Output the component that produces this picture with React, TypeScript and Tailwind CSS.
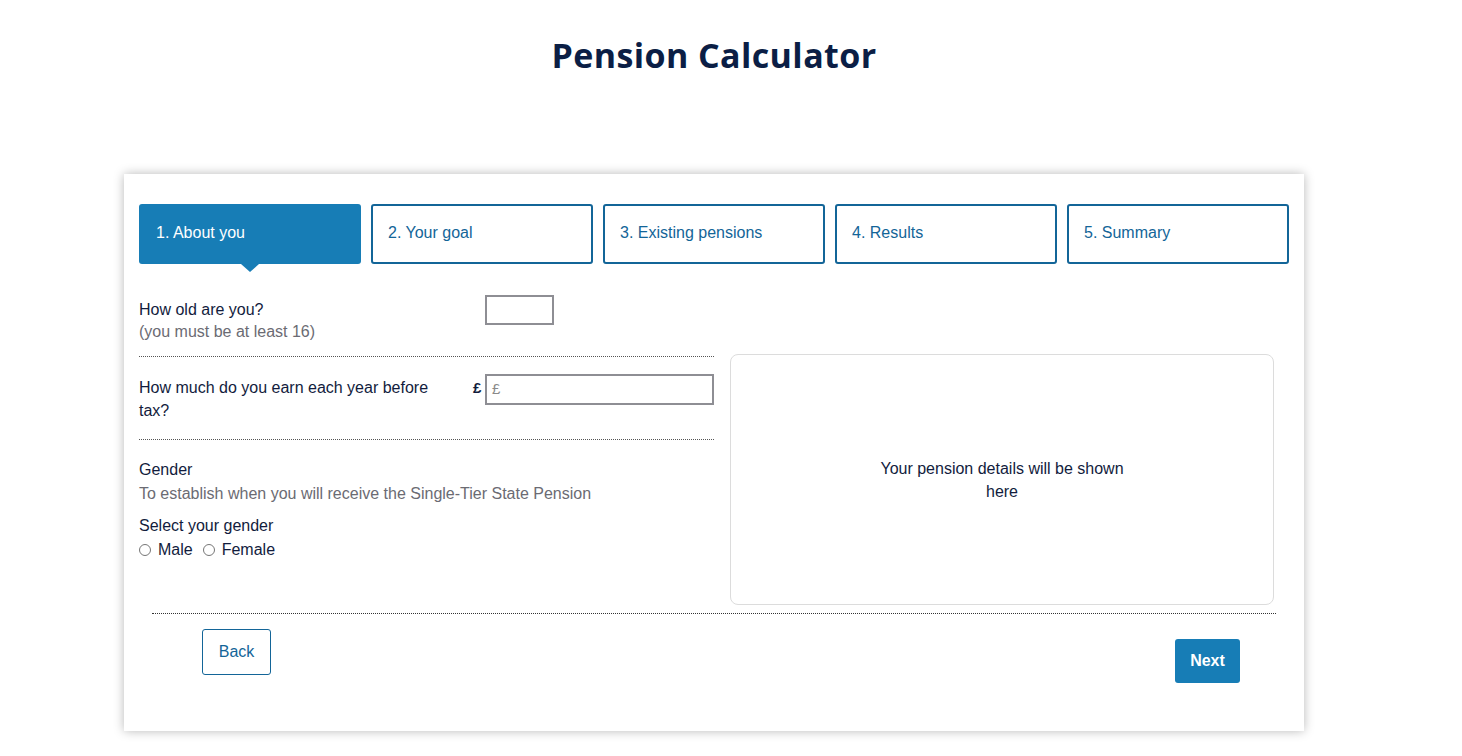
import React from "react";

const tabs = ["1. About you", "2. Your goal", "3. Existing pensions", "4. Results", "5. Summary"];

function Radio({ label }: { label: string }) {
  return (
    <label className="flex items-center gap-[7px]">
      <span className="h-[12px] w-[12px] rounded-full border border-[#767676] bg-white" />
      <span>{label}</span>
    </label>
  );
}

export default function App() {
  return (
    <div className="min-h-screen bg-white font-['Liberation_Sans',Arial,sans-serif] text-[#121c3d]">
      <div className="ml-[124px] w-[1180px] pt-[34px]">
        <h1 className="text-center font-['Open_Sans',sans-serif] text-[34px] font-bold leading-[42px] tracking-[0.4px] text-[#0b1e45]">
          Pension Calculator
        </h1>

        <div className="mt-[98px] bg-white px-[15px] pt-[30px] pb-[48px] shadow-[0_0_10px_rgba(0,0,0,0.28)]">
          <div className="flex gap-[10px]">
            {tabs.map((t, i) =>
              i === 0 ? (
                <div key={t} className="relative flex h-[60px] w-[222px] items-center rounded-[3px] bg-[#177db6] pb-[2px] pl-[17px] text-[16px] text-white">
                  {t}
                  <span className="absolute left-1/2 top-full -ml-[9px] h-0 w-0 border-x-[9px] border-t-[8px] border-x-transparent border-t-[#177db6]" />
                </div>
              ) : (
                <div key={t} className="flex h-[60px] w-[222px] items-center rounded-[3px] border-2 border-[#136598] pb-[2px] pl-[15px] text-[16px] text-[#136598]">
                  {t}
                </div>
              )
            )}
          </div>

          <div className="flex">
            <div className="w-[575px] pt-[31px]">
              <div className="flex border-b border-dotted border-[#555] pb-[13px]">
                <div className="mt-[4px] w-[334px] text-[16px] leading-[22px]">
                  <div>How old are you?</div>
                  <div className="text-[#6b6b73]">(you must be at least 16)</div>
                </div>
                <div className="w-[12px]" />
                <div className="h-[30px] w-[69px] border-2 border-[#8e8e94] bg-white" />
              </div>

              <div className="flex border-b border-dotted border-[#555] pt-[17px] pb-[17px]">
                <div className="mt-[2px] w-[310px] text-[16px] leading-[23px]">How much do you earn each year before tax?</div>
                <div className="w-[24px]" />
                <div className="mt-[3px] w-[12px] text-[15px] font-bold">£</div>
                <div className="flex h-[31px] w-[229px] items-center border-2 border-[#8e8e94] bg-white pl-[5px] text-[15px] text-[#8a8a8a]">£</div>
              </div>

              <div className="pt-[18px] text-[16px] leading-[24px]">
                <div>Gender</div>
                <div className="text-[#6b6b73]">To establish when you will receive the Single-Tier State Pension</div>
                <div className="mt-[8px]">Select your gender</div>
                <div className="flex gap-[10px]">
                  <Radio label="Male" />
                  <Radio label="Female" />
                </div>
              </div>
            </div>

            <div className="ml-[16px] mt-[90px] flex h-[251px] w-[544px] items-center justify-center rounded-[8px] border border-[#dcdcdc]">
              <p className="w-[260px] text-center text-[16px] leading-[23px]">Your pension details will be shown here</p>
            </div>
          </div>

          <div className="mx-[13px] mt-[8px] border-t border-dotted border-[#333]" />

          <div className="flex items-start justify-between pl-[63px] pr-[49px]">
            <button className="mt-[15px] h-[46px] w-[69px] rounded-[3px] border border-[#136598] text-[16px] text-[#136598]">Back</button>
            <button className="mt-[25px] h-[44px] w-[65px] rounded-[3px] bg-[#177db6] text-[16px] font-bold text-white">Next</button>
          </div>
        </div>
      </div>
    </div>
  );
}
